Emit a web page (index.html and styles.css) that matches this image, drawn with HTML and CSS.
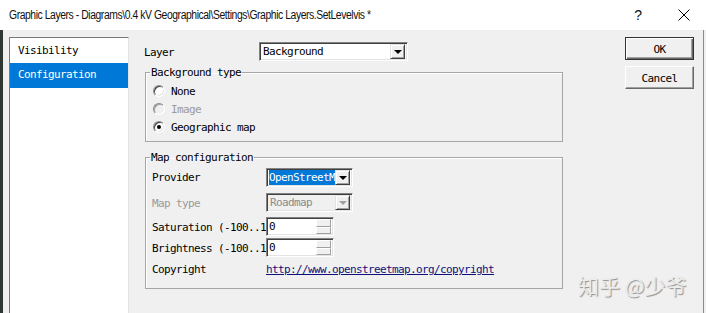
FILE: index.html
```html
<!DOCTYPE html>
<html>
<head>
<meta charset="utf-8">
<link rel="stylesheet" href="styles.css">
</head>
<body>
<div class="window">
  <div class="titlebar">
    <span class="title">Graphic Layers - Diagrams\0.4 kV Geographical\Settings\Graphic Layers.SetLevelvis *</span>
    <span class="help">?</span>
    <span class="close"><svg width="12" height="12" viewBox="0 0 12 12"><path d="M0.5 0.5 L11.5 11.5 M11.5 0.5 L0.5 11.5" stroke="#000" stroke-width="1" fill="none"/></svg></span>
  </div>
  <div class="client">
    <div class="nav">
      <div class="nav-item">Visibility</div>
      <div class="nav-item selected">Configuration</div>
    </div>
    <div class="main">
      <div class="layer-row">
        <span class="label layer-label">Layer</span>
        <div class="combo combo-layer">
          <span class="combo-text">Background</span>
          <span class="arrow-btn"><span class="tri"></span></span>
        </div>
      </div>
      <fieldset class="group group-bg">
        <legend>Background type</legend>
        <div class="group-body radios">
          <div class="radio-row"><span class="radio"></span><span>None</span></div>
          <div class="radio-row disabled"><span class="radio"></span><span>Image</span></div>
          <div class="radio-row"><span class="radio checked"></span><span>Geographic map</span></div>
        </div>
      </fieldset>
      <fieldset class="group group-map">
        <legend>Map configuration</legend>
        <div class="group-body map-body">
          <div class="frow r1">
            <span class="label">Provider</span>
            <div class="combo combo-small">
              <span class="combo-text sel"><span class="hl">OpenStreetMap</span></span>
              <span class="arrow-btn"><span class="tri"></span></span>
            </div>
          </div>
          <div class="frow r2 disabled">
            <span class="label">Map type</span>
            <div class="combo combo-small combo-disabled">
              <span class="combo-text">Roadmap</span>
              <span class="arrow-btn"><span class="tri"></span></span>
            </div>
          </div>
          <div class="frow r3">
            <span class="label clip">Saturation (-100..100)</span>
            <div class="spin">
              <span class="spin-text">0</span>
              <span class="spin-btns"><span class="sb"></span><span class="sb"></span></span>
            </div>
          </div>
          <div class="frow r4">
            <span class="label clip">Brightness (-100..100)</span>
            <div class="spin">
              <span class="spin-text">0</span>
              <span class="spin-btns"><span class="sb"></span><span class="sb"></span></span>
            </div>
          </div>
          <div class="frow r5">
            <span class="label">Copyright</span>
            <a class="link">http://www.openstreetmap.org/copyright</a>
          </div>
        </div>
      </fieldset>
    </div>
    <div class="buttons">
      <div class="btn default">OK</div>
      <div class="btn">Cancel</div>
    </div>
  </div>
  <div class="watermark">知乎 @少爷</div>
</div>
</body>
</html>
```

FILE: styles.css
```css
* { box-sizing: border-box; }
html, body { margin: 0; padding: 0; background: #f0f0f0; overflow: hidden; }
.window {
  position: relative;
  width: 706px;
  height: 313px;
  overflow: hidden;
  font-family: "DejaVu Sans Mono", "Liberation Mono", monospace;
  font-size: 11px;
  letter-spacing: -0.62px;
  color: #000;
}
.titlebar {
  height: 30px;
  background: #fff;
  display: flex;
  align-items: center;
  padding-left: 9px;
  font-family: "Liberation Sans", sans-serif;
  letter-spacing: -0.5px;
  font-size: 12px;
  padding-bottom: 1px;
}
.title {
  white-space: nowrap;
  display: inline-block;
  transform: scaleX(0.865);
  transform-origin: left center;
  color: #111;
}
.help { margin-left: auto; letter-spacing: 0; font-size: 14px; margin-right: 36px; color: #111; }
.close { display: flex; margin-right: 16px; }
.client {
  display: flex;
  height: 283px;
  width: 704px;
  border-left: 3px solid #303631;
  border-right: 1px solid #8a8a8a;
  padding-top: 7px;
  background: #f0f0f0;
}
.nav {
  margin-left: 6px;
  width: 120px;
  height: 300px;
  flex: none;
  background: #fff;
  border: 1px solid;
  border-color: #7a7a7a #e3e3e3 #e3e3e3 #7a7a7a;
  padding-top: 1px;
}
.nav-item {
  height: 24px;
  line-height: 23px;
  padding-left: 8px;
  white-space: nowrap;
}
.nav-item.selected { background: #0078d7; color: #fff; height: 25px; line-height: 24px; }
.main {
  margin-left: 15px;
  width: 420px;
  flex: none;
  display: flex;
  flex-direction: column;
}
.layer-row {
  display: flex;
  align-items: center;
  margin-top: 5px;
  height: 19px;
}
.label { white-space: nowrap; flex: none; }
.layer-label { width: 115px; padding-top: 1px; }
.combo {
  position: relative;
  display: flex;
  align-items: center;
  height: 19px;
  background: #fff;
  border: 1px solid;
  border-color: #828282 #fff #fff #828282;
  box-shadow: inset 1px 1px 0 #404040, inset -1px -1px 0 #e3e3e3;
  padding: 2px 2px 2px 3px;
}
.combo-layer { width: 149px; }
.combo-small { width: 87px; }
.combo-text { flex: 1; white-space: nowrap; overflow: hidden; line-height: 14px; padding-top: 1px; }
.combo-text.sel { margin-left: -1px; padding-top: 0; }
.hl { background: #0078d7; color: #fff; display: inline-block; width: 100%; line-height: 15px; }
.arrow-btn {
  width: 15px;
  height: 15px;
  flex: none;
  background: #f0f0f0;
  border: 1px solid;
  border-color: #e3e3e3 #404040 #404040 #e3e3e3;
  box-shadow: inset 1px 1px 0 #fff, inset -1px -1px 0 #a0a0a0;
  display: flex;
  align-items: center;
  justify-content: center;
}
.tri {
  width: 0; height: 0;
  border-left: 4px solid transparent;
  border-right: 4px solid transparent;
  border-top: 4px solid #000;
  margin-top: 1px;
}
.combo-disabled { background: #f0f0f0; color: #8a8a8a; }
.combo-disabled .tri { border-top-color: #a0a0a0; }
.group {
  margin: 0 0 0 1px;
  width: 418px;
  padding: 0;
  border: 1px solid #a6a6a6;
  box-shadow: 1px 1px 0 #fff inset;
  min-width: 0;
}
.group legend {
  margin-left: 4px;
  padding: 0 1px;
  line-height: 13px;
  height: 13px;
}
.group-bg { margin-top: 5px; height: 76px; }
.group-map { margin-top: 9px; height: 138px; }
.radios { padding: 3px 0 0 7px; }
.radio-row {
  display: flex;
  align-items: center;
  height: 18px;
}
.radio-row span:last-child { padding-top: 1px; }
.radio-row:last-child span:last-child { padding-top: 0; }
.radio {
  width: 12px;
  height: 12px;
  border-radius: 50%;
  background: #fff;
  border: 1px solid;
  border-color: #8a8a8a #fff #fff #8a8a8a;
  box-shadow: inset 1px 1px 0 #404040, inset -1px -1px 0 #e3e3e3;
  margin-right: 6px;
  position: relative;
  flex: none;
}
.radio.checked::after {
  content: "";
  position: absolute;
  left: 3px; top: 3px;
  width: 4px; height: 4px;
  border-radius: 50%;
  background: #000;
}
.disabled { color: #9a9a9a; }
.radio-row.disabled .radio { background: #f0f0f0; box-shadow: inset 1px 1px 0 #a0a0a0; }
.map-body { padding: 4px 0 0 6px; }
.frow { display: flex; align-items: flex-start; }
.frow .label { width: 114px; line-height: 19px; padding-top: 1px; }
.label.clip { overflow: hidden; }
.r1 { height: 25px; }
.r1 .label { padding-top: 0; }
.r2 { height: 24px; }
.r3, .r4 { height: 21px; }
.r5 { height: 19px; align-items: center; }
.spin {
  position: relative;
  width: 68px;
  height: 19px;
  display: flex;
  align-items: center;
  background: #fff;
  border: 1px solid;
  border-color: #828282 #fff #fff #828282;
  box-shadow: inset 1px 1px 0 #404040, inset -1px -1px 0 #e3e3e3;
  padding: 2px 2px 2px 2px;
}
.spin-text { flex: 1; line-height: 14px; }
.spin-btns {
  width: 15px;
  height: 15px;
  display: flex;
  flex-direction: column;
  flex: none;
}
.sb {
  flex: 1;
  background: #f0f0f0;
  border: 1px solid;
  border-color: #fff #a0a0a0 #a0a0a0 #fff;
}
.link { color: #10107a; text-decoration: underline; white-space: nowrap; padding-top: 2px; }
.buttons {
  margin-left: auto;
  margin-right: 9px;
  display: flex;
  flex-direction: column;
  gap: 6px;
  flex: none;
}
.btn {
  width: 69px;
  height: 23px;
  display: flex;
  align-items: center;
  justify-content: center;
  background: #f0f0f0;
  border: 1px solid;
  border-color: #fff #696969 #696969 #fff;
  box-shadow: inset -1px -1px 0 #a0a0a0;
  padding-top: 1px;
}
.btn.default {
  border: 1px solid #333;
  box-shadow: inset 1px 1px 0 #fff, inset -1px -1px 0 #696969, inset -2px -2px 0 #a0a0a0;
}
.watermark {
  position: absolute;
  left: 578px;
  top: 270px;
  font-family: "Noto Sans CJK SC", "Noto Sans", sans-serif;
  font-size: 21px;
  letter-spacing: 0;
  color: #ececec;
  text-shadow: 1px 1px 1px #8f8f8f;
  white-space: nowrap;
}
```
